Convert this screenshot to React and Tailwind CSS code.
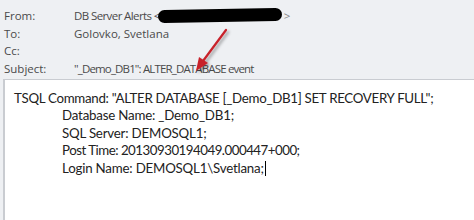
export default function App() {
  const labels = [
    ["From:", null],
    ["To:", "Golovko, Svetlana"],
    ["Cc:", ""],
    ["Subject:", "\"_Demo_DB1\": ALTER_DATABASE event"],
  ];
  return (
    <div className="w-[474px] h-[220px] bg-[#eef0f3] overflow-hidden flex flex-col relative" style={{ fontFamily: '"Open Sans", "DejaVu Sans", sans-serif' }}>
      <div className="pt-[7px] pl-[4px] flex flex-col text-[11.5px] text-[#4a4a4a]">
        {labels.map(([l, v], i) => (
          <div key={i} className="flex h-[17.5px] items-center whitespace-nowrap">
            <div className="w-[70px]">{l}</div>
            <div className="flex items-center">
              {v === null ? (
                <>
                  <span className="tracking-[-0.6px]">DB Server Alerts &lt;</span>
                  <span className="inline-block w-[124px] h-[13px] bg-black rounded-[7px] -ml-[2px] -rotate-[1deg]"></span>
                  <span className="ml-[2px] text-[#888]">&gt;</span>
                </>
              ) : (
                <span className={i === 3 ? "tracking-[-0.85px]" : ""}>{v}</span>
              )}
            </div>
          </div>
        ))}
      </div>
      <div className="mt-[2px] ml-[3px] flex-1 bg-white border-l-[2px] border-t border-[#c9ccd1] pt-[10px] pl-[9px] text-[13.3px] tracking-[-0.2px] text-[#222] leading-[17.4px] whitespace-nowrap" style={{ fontFamily: 'Lato, "Open Sans", sans-serif' }}>
        <div className="tracking-[-0.3px]">TSQL Command: "ALTER DATABASE [_Demo_DB1] SET RECOVERY FULL";</div>
        <div className="pl-[48px]">
          <div>Database Name: _Demo_DB1;</div>
          <div>SQL Server: DEMOSQL1;</div>
          <div className="tracking-[-0.5px]">Post Time: 20130930194049.000447+000;</div>
          <div className="flex items-center">Login Name: DEMOSQL1\Svetlana;<span className="inline-block w-[1px] h-[15px] bg-black ml-[1px]"></span></div>
        </div>
      </div>
      <svg className="absolute left-0 top-0" width="474" height="80" viewBox="0 0 474 80">
        <defs>
          <filter id="sh" x="-50%" y="-50%" width="200%" height="200%">
            <feDropShadow dx="2" dy="2" stdDeviation="1.5" floodColor="#000" floodOpacity="0.35" />
          </filter>
        </defs>
        <g filter="url(#sh)">
          <line x1="226" y1="30" x2="203" y2="61" stroke="#c8232c" strokeWidth="2.2" strokeLinecap="round" />
          <polygon points="196,71 199,57 208,63" fill="#c8232c" />
        </g>
      </svg>
    </div>
  );
}
